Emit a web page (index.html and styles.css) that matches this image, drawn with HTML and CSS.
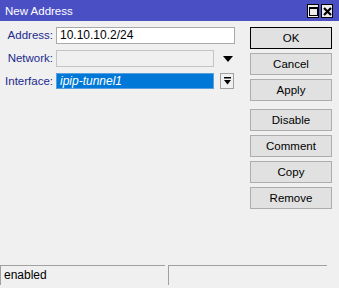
FILE: index.html
```html
<!DOCTYPE html>
<html lang="en">
<head>
  <meta charset="UTF-8" />
  <title>New Address</title>
  <link rel="stylesheet" href="styles.css">
</head>
<body>
  <div class="window">
    <div class="titlebar">
      <span class="title">New Address</span>
      <div class="title-btns">
        <span class="tbtn"><svg width="9" height="9" viewBox="0 0 9 9"><rect x="0.5" y="0.5" width="8" height="8" fill="none" stroke="#000"/><rect x="0" y="0" width="9" height="2" fill="#000"/></svg></span>
        <span class="tbtn"><svg width="9" height="9" viewBox="0 0 9 9"><path d="M1 1 L8 8 M8 1 L1 8" stroke="#000" stroke-width="2.2"/></svg></span>
      </div>
    </div>

    <div class="content">
      <div class="form">
        <label>Address:</label>
        <div class="field wide">10.10.10.2/24</div>

        <label>Network:</label>
        <div class="field disabled"></div>
        <div class="arrow"><svg width="10" height="6" viewBox="0 0 10 6"><path d="M0 0 H10 L5 6 Z" fill="#000"/></svg></div>

        <label>Interface:</label>
        <div class="field selected">ipip-tunnel1</div>
        <div class="drop"><svg width="7" height="8" viewBox="0 0 7 8"><rect x="0" y="0" width="7" height="1.5" fill="#000"/><path d="M0 3 H7 L3.5 7.5 Z" fill="#000"/></svg></div>
      </div>

      <div class="buttons">
        <button class="default">OK</button>
        <button>Cancel</button>
        <button>Apply</button>
        <button class="gap">Disable</button>
        <button>Comment</button>
        <button>Copy</button>
        <button>Remove</button>
      </div>
    </div>

    <div class="statusbar">
      <div class="panel left">enabled</div>
      <div class="panel right"></div>
    </div>
  </div>
</body>
</html>
```

FILE: styles.css
```css
* {
  margin: 0;
  padding: 0;
  box-sizing: border-box;
  font-family: 'Liberation Sans', Arial, sans-serif;
}

body {
  background: #f0f0f0;
  width: 339px;
  height: 288px;
  overflow: hidden;
}

.window {
  display: flex;
  flex-direction: column;
  height: 288px;
}

.titlebar {
  height: 21px;
  background: #4b4fc4;
  color: #fff;
  display: flex;
  align-items: center;
  justify-content: space-between;
  padding: 1px 6px 0 5px;
}

.title {
  font-size: 11.5px;
}

.title-btns {
  display: flex;
  gap: 2px;
}

.tbtn {
  width: 12px;
  height: 14px;
  background: #ececec;
  border: 1px solid #000;
  display: flex;
  align-items: center;
  justify-content: center;
}

.content {
  flex: 1;
  display: flex;
  padding-top: 6px;
}

.form {
  display: grid;
  grid-template-columns: 53px 158px 19px;
  grid-auto-rows: 17px;
  column-gap: 3px;
  row-gap: 6px;
  align-content: start;
  width: 250px;
}

.form label {
  color: #1c2a8e;
  font-size: 11.5px;
  text-align: right;
  line-height: 17px;
}

.field {
  border: 1px solid #a9a9a9;
  background: #fff;
  font-size: 12px;
  line-height: 15px;
  padding-left: 3px;
  color: #000;
}

.field.wide {
  grid-column: span 2;
  margin-right: 1px;
}

.field.disabled {
  background: #f0f0f0;
  border-color: #c4c4c4;
}

.field.selected {
  background: #0078d7;
  border-color: #5a9fdd;
  color: #fff;
  font-style: italic;
  height: 16px;
}

.arrow {
  display: flex;
  align-items: center;
  justify-content: center;
  padding-left: 2px;
}

.drop {
  width: 14px;
  height: 16px;
  margin-left: 3px;
  border: 1px solid #a0a0a0;
  background: #f0f0f0;
  display: flex;
  align-items: center;
  justify-content: center;
}

.buttons {
  display: flex;
  flex-direction: column;
  gap: 4px;
  width: 82px;
}

.buttons button {
  height: 22px;
  background: #e1e1e1;
  border: 1px solid #adadad;
  font-size: 11.5px;
  color: #000;
}

.buttons button.default {
  border: 1px solid #000;
}

.buttons button.gap {
  margin-top: 4px;
}

.statusbar {
  display: flex;
  gap: 3px;
  height: 20px;
  margin-bottom: 3px;
  padding-right: 12px;
}

.panel {
  border-top: 1px solid #a0a0a0;
  border-left: 1px solid #a0a0a0;
  font-size: 12px;
  line-height: 19px;
  padding-left: 3px;
}

.panel.left {
  width: 165px;
}

.panel.right {
  flex: 1;
}
```
